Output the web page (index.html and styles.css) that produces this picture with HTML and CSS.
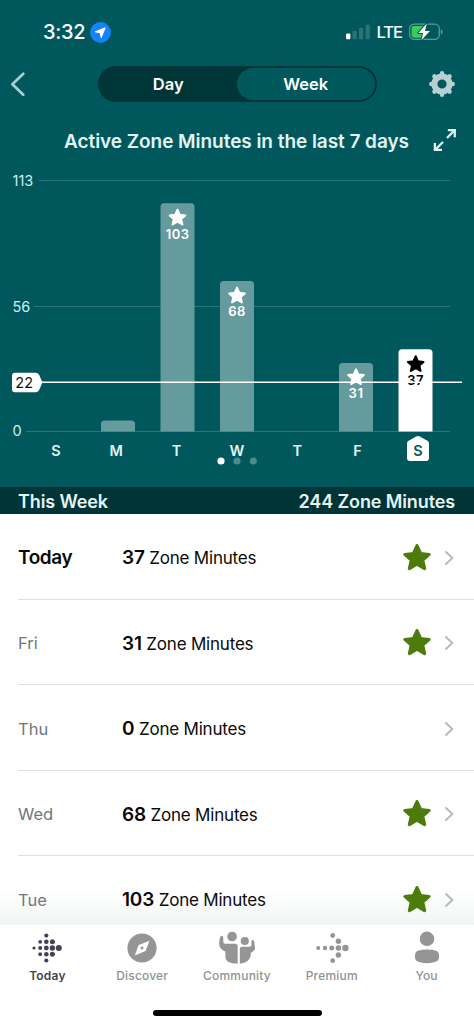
FILE: index.html
```
<!DOCTYPE html>
<html lang="en">
<head>
    <meta charset="UTF-8">
    <meta name="viewport" content="width=device-width, initial-scale=1.0">
    <title>Active Zone Minutes</title>
    <link rel="stylesheet" href="styles.css">
</head>
<body>
    <svg class="defs" width="0" height="0">
        <defs>
            <path id="star" d="M0 -8 L2.3 -2.9 L7.8 -2.3 L3.7 1.4 L4.9 6.8 L0 4 L-4.9 6.8 L-3.7 1.4 L-7.8 -2.3 L-2.3 -2.9 Z" stroke-width="2" stroke-linejoin="round"/>
        </defs>
    </svg>
    <div class="app">
        <header class="status-bar">
            <div class="status-left">
                <span class="time">3:32</span>
                <svg width="21" height="21" viewBox="0 0 21 21">
                    <circle cx="10.5" cy="10.5" r="10.4" fill="#1583fb"/>
                    <path d="M15.2 5.8 L11.2 15.6 L10.2 10.9 L5.2 9.8 Z" fill="#fff" stroke="#fff" stroke-width="1" stroke-linejoin="round"/>
                </svg>
            </div>
            <div class="status-right">
                <svg width="24" height="16" viewBox="0 0 24 16">
                    <rect x="0" y="9.5" width="4.4" height="5.8" rx="1.2" fill="#fff"/>
                    <rect x="6.5" y="6.8" width="4.2" height="8.5" rx="1.2" fill="#2c7376"/>
                    <rect x="13" y="3.7" width="4.2" height="11.6" rx="1.2" fill="#2c7376"/>
                    <rect x="19.6" y="0.5" width="4.2" height="14.8" rx="1.2" fill="#2c7376"/>
                </svg>
                <span class="carrier">LTE</span>
                <svg width="34" height="18" viewBox="0 0 34 18">
                    <rect x="0.7" y="1.2" width="29.6" height="15.2" rx="4.6" fill="none" stroke="#66999b" stroke-width="1.2"/>
                    <path d="M31.8 6.3 q1.8 .8 1.8 2.6 t-1.8 2.6 Z" fill="#66999b"/>
                    <path d="M5 3.1 H14 V14.7 H5 a2.4 2.4 0 0 1 -2.4 -2.4 V5.5 A2.4 2.4 0 0 1 5 3.1 Z" fill="#34cf58"/>
                    <path d="M17.8 0.6 L9.3 10 H14.1 L12.4 17.3 L20.9 7.9 H16 Z" fill="#fff" stroke="#00585c" stroke-width="2" paint-order="stroke" stroke-linejoin="round"/>
                </svg>
            </div>
        </header>

        <nav class="top-nav">
            <svg class="back" width="16" height="26" viewBox="0 0 16 26">
                <path d="M13.3 2.8 L2.4 13.2 L13.3 23.8" fill="none" stroke="#abcdcf" stroke-width="2.7" stroke-linecap="round" stroke-linejoin="round"/>
            </svg>
            <div class="toggle">
                <span class="toggle-item">Day</span>
                <span class="toggle-item active">Week</span>
            </div>
            <svg class="gear" width="28" height="28" viewBox="-14 -14 28 28">
                <circle r="7.6" fill="none" stroke="#b7d1d3" stroke-width="6"/>
                <g stroke="#b7d1d3" stroke-width="4.4" stroke-linecap="round">
                    <path d="M0 -9 V-10.7 M0 9 V10.7 M-9 0 H-10.7 M9 0 H10.7"/>
                    <path d="M6.4 -6.4 L7.6 -7.6 M-6.4 6.4 L-7.6 7.6 M-6.4 -6.4 L-7.6 -7.6 M6.4 6.4 L7.6 7.6"/>
                </g>
            </svg>
        </nav>

        <div class="chart-title">
            <h1>Active Zone Minutes in the last 7 days</h1>
            <svg width="24" height="24" viewBox="0 0 24 24" fill="none" stroke="#e4f2f3" stroke-width="2.3">
                <path d="M14 10 L21.6 2.2 M14.8 2.2 H21.8 V9.2"/>
                <path d="M10 14 L2.2 21.8 M1.9 14.9 V21.9 H9"/>
            </svg>
        </div>

        <svg class="chart" width="474" height="322" viewBox="0 165 474 322">
            <g class="grid">
                <path d="M39 180.5 H450"/>
                <path d="M34 306.5 H450"/>
                <path d="M26 431.5 H450"/>
            </g>
            <g class="axis">
                <text x="12.5" y="186">113</text>
                <text x="12.5" y="312">56</text>
                <text x="12.5" y="436.3">0</text>
            </g>
            <g class="bars">
                <path d="M101 431.5 V424 a3.5 3.5 0 0 1 3.5 -3.5 h27 a3.5 3.5 0 0 1 3.5 3.5 V431.5 Z"/>
                <path d="M160.5 431.5 V206.7 a3.5 3.5 0 0 1 3.5 -3.5 h27 a3.5 3.5 0 0 1 3.5 3.5 V431.5 Z"/>
                <path d="M220 431.5 V284.5 a3.5 3.5 0 0 1 3.5 -3.5 h27 a3.5 3.5 0 0 1 3.5 3.5 V431.5 Z"/>
                <path d="M339 431.5 V366.5 a3.5 3.5 0 0 1 3.5 -3.5 h27 a3.5 3.5 0 0 1 3.5 3.5 V431.5 Z"/>
                <path class="today" d="M398.5 431.5 V352.7 a3.5 3.5 0 0 1 3.5 -3.5 h27 a3.5 3.5 0 0 1 3.5 3.5 V431.5 Z"/>
            </g>
            <g class="values">
                <use href="#star" x="177.5" y="217.7"/>
                <text x="177.7" y="238.7">103</text>
                <use href="#star" x="237" y="295.7"/>
                <text x="237" y="316.4">68</text>
                <use href="#star" x="356" y="377.3"/>
                <text x="356" y="398">31</text>
                <g class="today">
                    <use href="#star" x="415.7" y="364.2"/>
                    <text x="415.7" y="385">37</text>
                </g>
            </g>
            <path d="M42 382.2 H462" stroke="#fff" stroke-width="1.5"/>
            <path d="M15 372.8 H35.5 q2.4 0 3.6 2 l3.4 7.6 l-3.4 7.6 q-1.2 2.2 -3.6 2.2 H15 a3 3 0 0 1 -3 -3 V375.8 a3 3 0 0 1 3 -3 Z" fill="#fff"/>
            <text class="average" x="15.3" y="387.7">22</text>
            <path d="M410 461 a3 3 0 0 1 -3 -3 V443.4 q0 -1.8 1.6 -2.6 l7.6 -4.2 q1.8 -1 3.6 0 l7.6 4.2 q1.6 .8 1.6 2.6 V458 a3 3 0 0 1 -3 3 Z" fill="#fff"/>
            <g class="days">
                <text x="56" y="455.7">S</text>
                <text x="116.2" y="455.7">M</text>
                <text x="176.6" y="455.7">T</text>
                <text x="237" y="455.7">W</text>
                <text x="297.2" y="455.7">T</text>
                <text x="357.5" y="455.7">F</text>
                <text class="current" x="418" y="455.9">S</text>
            </g>
            <g fill="#4d8b8e">
                <circle cx="221" cy="461" r="3.6" fill="#fff"/>
                <circle cx="237" cy="461" r="3.5"/>
                <circle cx="253.3" cy="461" r="3.5"/>
            </g>
        </svg>

        <div class="summary">
            <span>This Week</span>
            <span class="total">244 Zone Minutes</span>
        </div>

        <main class="day-list">
            <div class="day-row">
                <span class="day today">Today</span>
                <span class="minutes"><b>37</b> Zone Minutes</span>
                <svg class="goal" viewBox="-9 -9 18 18"><use href="#star"/></svg>
                <svg class="chevron" viewBox="0 0 10 16"><path d="M1.5 1.5 L8.3 8 L1.5 14.5"/></svg>
            </div>
            <div class="day-row">
                <span class="day">Fri</span>
                <span class="minutes"><b>31</b> Zone Minutes</span>
                <svg class="goal" viewBox="-9 -9 18 18"><use href="#star"/></svg>
                <svg class="chevron" viewBox="0 0 10 16"><path d="M1.5 1.5 L8.3 8 L1.5 14.5"/></svg>
            </div>
            <div class="day-row">
                <span class="day">Thu</span>
                <span class="minutes"><b>0</b> Zone Minutes</span>
                <svg class="chevron" viewBox="0 0 10 16"><path d="M1.5 1.5 L8.3 8 L1.5 14.5"/></svg>
            </div>
            <div class="day-row">
                <span class="day">Wed</span>
                <span class="minutes"><b>68</b> Zone Minutes</span>
                <svg class="goal" viewBox="-9 -9 18 18"><use href="#star"/></svg>
                <svg class="chevron" viewBox="0 0 10 16"><path d="M1.5 1.5 L8.3 8 L1.5 14.5"/></svg>
            </div>
            <div class="day-row">
                <span class="day">Tue</span>
                <span class="minutes"><b>103</b> Zone Minutes</span>
                <svg class="goal" viewBox="-9 -9 18 18"><use href="#star"/></svg>
                <svg class="chevron" viewBox="0 0 10 16"><path d="M1.5 1.5 L8.3 8 L1.5 14.5"/></svg>
            </div>
        </main>

        <footer class="tab-bar">
            <div class="tabs">
                <div class="tab active">
                    <svg width="36" height="36" viewBox="0 0 36 36">
                        <circle cx="5" cy="18" r="1.6"/>
                        <circle cx="11.2" cy="11.8" r="1.9"/>
                        <circle cx="11.2" cy="18" r="2"/>
                        <circle cx="11.2" cy="24.2" r="1.9"/>
                        <circle cx="17.3" cy="5.6" r="2.1"/>
                        <circle cx="17.3" cy="11.8" r="2.3"/>
                        <circle cx="17.3" cy="18" r="2.4"/>
                        <circle cx="17.3" cy="24.2" r="2.3"/>
                        <circle cx="17.3" cy="30.5" r="2.1"/>
                        <circle cx="23.4" cy="11.8" r="2.5"/>
                        <circle cx="23.4" cy="18" r="2.7"/>
                        <circle cx="23.4" cy="24.2" r="2.5"/>
                        <circle cx="29.8" cy="18" r="3"/>
                    </svg>
                    <span>Today</span>
                </div>
                <div class="tab">
                    <svg width="36" height="36" viewBox="0 0 36 36">
                        <circle cx="18" cy="18" r="14.6"/>
                        <path d="M25.5 10.7 L21.5 21 L10.8 25.6 L14.7 15 Z" fill="#fff"/>
                        <circle cx="18" cy="18" r="1.5"/>
                    </svg>
                    <span>Discover</span>
                </div>
                <div class="tab">
                    <svg width="40" height="36" viewBox="0 0 40 36">
                        <circle cx="15.1" cy="6.5" r="4.8"/>
                        <path d="M3.7 6 q1.9 -1 2.5 1 L6.3 12.2 q.3 1.6 2.6 1.6 H18 q2.7 0 2.7 2.7 V33.8 Q8.4 33.4 8.4 27 V21.4 Q2.2 19.4 2.1 13.5 Q2 9 3.7 6 Z"/>
                        <circle cx="27.8" cy="11" r="4.1"/>
                        <path d="M22.8 33.8 V19 q0 -2.3 2.2 -2.3 H32.5 q1.8 0 2 -1.8 L34.4 11 q1.6 -2 2.8 .2 L38 18 Q38.2 20.8 33.8 22.8 V25 Q33 32.5 22.8 33.8 Z"/>
                    </svg>
                    <span>Community</span>
                </div>
                <div class="tab">
                    <svg width="36" height="36" viewBox="0 0 36 36">
                        <circle cx="4.2" cy="18" r="2"/>
                        <circle cx="11" cy="18" r="2.2"/>
                        <circle cx="17.7" cy="18" r="2.5"/>
                        <circle cx="18.7" cy="5.5" r="2.4"/>
                        <circle cx="24.4" cy="11.2" r="2.7"/>
                        <circle cx="24.4" cy="18" r="2.8"/>
                        <circle cx="24.4" cy="25" r="2.7"/>
                        <circle cx="18.7" cy="30.7" r="2.4"/>
                        <circle cx="31.4" cy="18" r="3.2"/>
                    </svg>
                    <span>Premium</span>
                </div>
                <div class="tab">
                    <svg width="36" height="36" viewBox="0 0 36 36">
                        <circle cx="18" cy="8.8" r="7.3"/>
                        <path d="M18 19.5 Q23.5 19.5 27.3 20.8 Q30 22 30 25.6 V27.6 Q30 30 27.8 31.2 Q23.5 33.2 18 33.2 T8.2 31.2 Q6 30 6 27.6 V25.6 Q6 22 8.7 20.8 Q12.5 19.5 18 19.5 Z"/>
                    </svg>
                    <span>You</span>
                </div>
            </div>
            <div class="home-indicator"></div>
        </footer>
    </div>
</body>
</html>
```
FILE: styles.css
```
* {
    box-sizing: border-box;
}
body {
    font-family: Inter, "Liberation Sans", sans-serif;
    margin: 0;
    padding: 0;
    background-color: #fff;
    color: #0a0a0a;
}
svg {
    display: block;
    flex-shrink: 0;
}
.defs {
    position: absolute;
}
.app {
    display: flex;
    flex-direction: column;
    width: 474px;
    height: 1026px;
    overflow: hidden;
    background-color: #00585c;
}
.status-bar {
    display: flex;
    justify-content: space-between;
    height: 64px;
    padding: 0 31px 0 43px;
    color: #fff;
}
.status-left, .status-right {
    display: flex;
    align-items: center;
}
.status-left {
    gap: 5px;
}
.status-right {
    gap: 7px;
}
.time {
    font-size: 20px;
    font-weight: 500;
    letter-spacing: -0.3px;
}
.carrier {
    font-size: 16.5px;
    font-weight: 500;
    letter-spacing: -1px;
}
.top-nav {
    display: flex;
    align-items: center;
    justify-content: space-between;
    height: 40px;
    padding: 0 18px 0 10px;
}
.toggle {
    display: flex;
    width: 279px;
    height: 36px;
    margin-left: 60px;
    margin-right: 40px;
    padding: 2px;
    border-radius: 18px;
    background-color: #003638;
}
.toggle-item {
    flex: 1;
    display: flex;
    align-items: center;
    justify-content: center;
    border-radius: 16px;
    color: #fff;
    font-size: 16.5px;
    font-weight: 600;
}
.toggle-item.active {
    background-color: #00585c;
}
.chart-title {
    display: flex;
    align-items: center;
    justify-content: space-between;
    height: 61px;
    padding: 11px 17px 0 64px;
}
.chart-title h1 {
    margin: 0;
    padding-top: 3px;
    color: #e4f4f5;
    font-size: 19px;
    font-weight: 600;
    letter-spacing: -0.05px;
    white-space: nowrap;
}
.chart-title svg {
    margin-bottom: 1px;
}
.chart {
    font-size: 14px;
}
.grid path {
    stroke: #2b7679;
    stroke-width: 1;
}
.axis text {
    fill: #c8f0f0;
    font-size: 14.5px;
}
.bars path {
    fill: #669b9d;
}
.bars .today {
    fill: #fff;
}
.values {
    fill: #fff;
    stroke: #fff;
}
.values text {
    stroke: none;
    font-size: 13px;
    font-weight: 600;
    text-anchor: middle;
    letter-spacing: 0.5px;
}
.values .today {
    fill: #000;
    stroke: #000;
}
.average {
    fill: #111;
    font-size: 14.5px;
}
.days text {
    fill: #e4f4f5;
    font-size: 14.5px;
    font-weight: 600;
    text-anchor: middle;
}
.days .current {
    fill: #00585c;
}
.summary {
    display: flex;
    align-items: center;
    justify-content: space-between;
    height: 27px;
    padding: 1px 19px 0 18px;
    background-color: #003437;
    color: #e4f4f5;
    font-size: 18px;
    font-weight: 600;
    letter-spacing: -0.12px;
}
.day-list {
    height: 411px;
    overflow: hidden;
    background: linear-gradient(#fff 375px, #f2f5f5 411px);
}
.day-row {
    display: flex;
    align-items: center;
    height: 85.5px;
    margin-left: 18px;
    padding: 3px 20px 0 0;
    border-bottom: 1px solid #dfdfdf;
}
.day {
    width: 104px;
    color: #6f787d;
    font-size: 16.5px;
}
.day.today {
    color: #0a0a0a;
    font-size: 19px;
    font-weight: 600;
    letter-spacing: -0.4px;
}
.minutes {
    flex: 1;
    font-size: 17px;
    letter-spacing: -0.2px;
}
.minutes b {
    font-size: 19px;
    font-weight: 600;
}
.goal {
    width: 28px;
    height: 28px;
    margin-right: 13px;
    fill: #4b7c0c;
    stroke: #4b7c0c;
}
.chevron {
    width: 10px;
    height: 16px;
    fill: none;
    stroke: #b9b9b9;
    stroke-width: 2;
}
.tab-bar {
    flex: 1;
    background-color: #fff;
}
.tabs {
    display: flex;
    height: 85px;
    padding-top: 5px;
}
.tab {
    flex: 1;
    display: flex;
    flex-direction: column;
    align-items: center;
    color: #929292;
    fill: #959595;
    font-size: 12px;
    font-weight: 500;
    letter-spacing: 0.2px;
}
.tab span {
    margin-top: 2px;
}
.tab.active {
    color: #424453;
    fill: #424453;
    font-weight: 600;
}
.home-indicator {
    width: 169px;
    height: 6px;
    margin: 0 auto;
    border-radius: 3px;
    background-color: #000;
}
```
